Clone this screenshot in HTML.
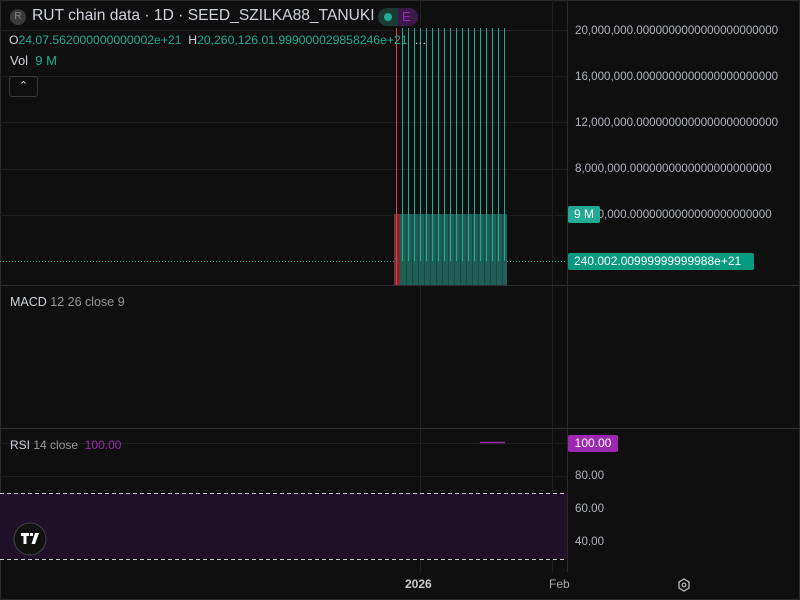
<!DOCTYPE html><html><head><style>
body{margin:0;width:800px;height:600px;background:#0f0f0f;overflow:hidden;font-family:"Liberation Sans",sans-serif;position:relative}
.a{position:absolute;white-space:nowrap}
.ax{position:absolute;left:575px;color:#b2b5be;font-size:11.6px}
</style></head><body>
<svg class="a" style="left:0;top:0" width="800" height="600">
<rect x="0.5" y="0.5" width="799" height="599" fill="none" stroke="#2a2a2a"/>
<g stroke="#1f1f1f" stroke-width="1">
<line x1="0" y1="30.5" x2="567" y2="30.5"/><line x1="0" y1="76.5" x2="567" y2="76.5"/>
<line x1="0" y1="122.5" x2="567" y2="122.5"/><line x1="0" y1="169.5" x2="567" y2="169.5"/>
<line x1="0" y1="215.5" x2="567" y2="215.5"/>
<line x1="0" y1="443.5" x2="567" y2="443.5"/><line x1="0" y1="476.5" x2="567" y2="476.5"/>
<line x1="0" y1="509.5" x2="567" y2="509.5"/><line x1="0" y1="542.5" x2="567" y2="542.5"/>
<line x1="420.5" y1="0" x2="420.5" y2="572"/><line x1="552.5" y1="0" x2="552.5" y2="572"/>
</g>
<line x1="0" y1="285.5" x2="800" y2="285.5" stroke="#2e2e2e"/>
<line x1="0" y1="428.5" x2="800" y2="428.5" stroke="#2e2e2e"/>
<line x1="567.5" y1="0" x2="567.5" y2="572" stroke="#2a2a2a"/>
<rect x="0" y="493" width="567" height="66" fill="#1e1029"/>
<line x1="0" y1="493.5" x2="567" y2="493.5" stroke="#ccc" stroke-dasharray="4,3"/>
<line x1="0" y1="559.5" x2="567" y2="559.5" stroke="#ccc" stroke-dasharray="4,3"/>
<line x1="480" y1="442.5" x2="505" y2="442.5" stroke="#9c27b0" stroke-width="1.5"/>
<line x1="0" y1="261.5" x2="567" y2="261.5" stroke="#22ab94" stroke-dasharray="1,2"/>
<rect x="394" y="214" width="6" height="71" fill="#7a2e33"/>
<rect x="400" y="214" width="107" height="71" fill="#1f5f55"/>
<g stroke="#184a43"><line x1="406.5" y1="214" x2="406.5" y2="285"/><line x1="412.5" y1="214" x2="412.5" y2="285"/><line x1="418.5" y1="214" x2="418.5" y2="285"/><line x1="424.5" y1="214" x2="424.5" y2="285"/><line x1="430.5" y1="214" x2="430.5" y2="285"/><line x1="436.5" y1="214" x2="436.5" y2="285"/><line x1="442.5" y1="214" x2="442.5" y2="285"/><line x1="448.5" y1="214" x2="448.5" y2="285"/><line x1="454.5" y1="214" x2="454.5" y2="285"/><line x1="460.5" y1="214" x2="460.5" y2="285"/><line x1="466.5" y1="214" x2="466.5" y2="285"/><line x1="472.5" y1="214" x2="472.5" y2="285"/><line x1="478.5" y1="214" x2="478.5" y2="285"/><line x1="484.5" y1="214" x2="484.5" y2="285"/><line x1="490.5" y1="214" x2="490.5" y2="285"/><line x1="496.5" y1="214" x2="496.5" y2="285"/><line x1="502.5" y1="214" x2="502.5" y2="285"/></g>
<line x1="396.5" y1="28" x2="396.5" y2="285" stroke="#f23645"/>
<g stroke="#22ab94"><line x1="402.5" y1="28" x2="402.5" y2="261"/><line x1="408.5" y1="28" x2="408.5" y2="261"/><line x1="414.5" y1="28" x2="414.5" y2="261"/><line x1="420.5" y1="28" x2="420.5" y2="261"/><line x1="426.5" y1="28" x2="426.5" y2="261"/><line x1="432.5" y1="28" x2="432.5" y2="261"/><line x1="438.5" y1="28" x2="438.5" y2="261"/><line x1="444.5" y1="28" x2="444.5" y2="261"/><line x1="450.5" y1="28" x2="450.5" y2="261"/><line x1="456.5" y1="28" x2="456.5" y2="261"/><line x1="462.5" y1="28" x2="462.5" y2="261"/><line x1="468.5" y1="28" x2="468.5" y2="261"/><line x1="474.5" y1="28" x2="474.5" y2="261"/><line x1="480.5" y1="28" x2="480.5" y2="261"/><line x1="486.5" y1="28" x2="486.5" y2="261"/><line x1="492.5" y1="28" x2="492.5" y2="261"/><line x1="498.5" y1="28" x2="498.5" y2="261"/><line x1="504.5" y1="28" x2="504.5" y2="261"/></g>
<circle cx="30" cy="539" r="16" fill="#111" stroke="#444"/>
<path d="M21 533h8v3h-2.5v8h-3v-8h-2.5z M30 533h3v3h-3z M35 533h4l-4 11h-3.5z" fill="#fff"/>
<path d="M684 579l5 3v6l-5 3l-5-3v-6z" fill="none" stroke="#bbb" stroke-width="1.3"/><circle cx="684" cy="585" r="1.8" fill="none" stroke="#bbb" stroke-width="1.2"/>
</svg>
<div class="a" style="left:10px;top:9px;width:16px;height:16px;border-radius:8px;background:#3a3a3a;color:#888;font-size:10px;text-align:center;line-height:16px">R</div>
<div class="a" style="left:32px;top:7px;color:#d1d4dc;font-size:15.6px">RUT chain data · 1D · SEED_SZILKA88_TANUKI</div>
<div class="a" style="left:378px;top:8px;width:40px;height:18px;border-radius:9px;background:#1b3a33;overflow:hidden"><div style="position:absolute;left:20px;top:0;width:20px;height:18px;background:#3b1a4a"></div><div style="position:absolute;left:6px;top:5px;width:8px;height:8px;border-radius:4px;background:#22ab94"></div><div style="position:absolute;left:24px;top:1px;color:#9c27b0;font-size:13px">E</div></div>
<div class="a" style="left:9px;top:33px;font-size:12.2px;color:#d1d4dc">O<span style="color:#22ab94">24.07.562000000000002e+21</span>&nbsp; H<span style="color:#22ab94">20,260,126.01.999000029858246e+21</span>&nbsp; …</div>
<div class="a" style="left:10px;top:53px;font-size:13px;color:#d1d4dc">Vol &nbsp;<span style="color:#22ab94">9 M</span></div>
<div class="a" style="left:9px;top:76px;width:27px;height:19px;border:1px solid #3a3a3a;border-radius:3px;color:#ddd;font-size:11px;text-align:center;line-height:19px">⌃</div>
<div class="a" style="left:10px;top:295px;font-size:12.5px;color:#d1d4dc">MACD <span style="color:#999">12 26 close 9</span></div>
<div class="a" style="left:10px;top:438px;font-size:12px;color:#d1d4dc">RSI <span style="color:#999">14 close</span> &nbsp;<span style="color:#9c27b0">100.00</span></div>
<div class="ax" style="top:24px">20,000,000.0000000000000000000000</div>
<div class="ax" style="top:70px">16,000,000.0000000000000000000000</div>
<div class="ax" style="top:116px">12,000,000.0000000000000000000000</div>
<div class="ax" style="top:162px">8,000,000.0000000000000000000000</div>
<div class="ax" style="top:208px">0,000,000.0000000000000000000000</div>
<div class="a" style="left:568px;top:206px;width:32px;height:17px;background:#22ab94;color:#fff;font-size:12px;line-height:17px;text-align:center;border-radius:2px">9 M</div>
<div class="a" style="left:568px;top:253px;width:186px;height:17px;background:#089981;color:#fff;font-size:12px;line-height:17px;padding-left:6px;box-sizing:border-box;border-radius:2px">240.002.00999999999988e+21</div>
<div class="a" style="left:568px;top:435px;width:50px;height:17px;background:#9c27b0;color:#fff;font-size:12px;line-height:17px;text-align:center;border-radius:2px">100.00</div>
<div class="ax" style="top:469px">80.00</div>
<div class="ax" style="top:502px">60.00</div>
<div class="ax" style="top:535px">40.00</div>
<div class="a" style="left:405px;top:577px;font-size:12px;color:#ccc;font-weight:bold">2026</div>
<div class="a" style="left:549px;top:577px;font-size:12px;color:#aaa">Feb</div>
</body></html>
